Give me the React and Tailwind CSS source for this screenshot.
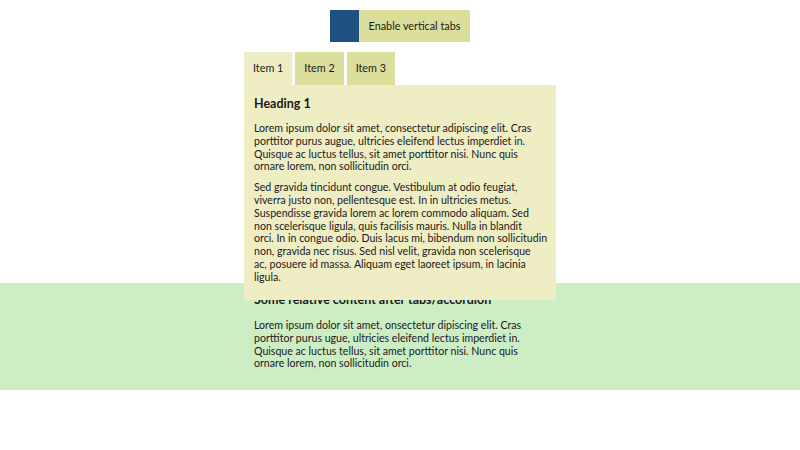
import { useState } from "react";

// panel copy kept as lines so the wrap matches the design
const TABS = [
  {
    label: "Item 1",
    heading: "Heading 1",
    body: [
      [
        "Lorem ipsum dolor sit amet, consectetur adipiscing elit. Cras",
        "porttitor purus augue, ultricies eleifend lectus imperdiet in.",
        "Quisque ac luctus tellus, sit amet porttitor nisi. Nunc quis",
        "ornare lorem, non sollicitudin orci.",
      ],
      [
        "Sed gravida tincidunt congue. Vestibulum at odio feugiat,",
        "viverra justo non, pellentesque est. In in ultricies metus.",
        "Suspendisse gravida lorem ac lorem commodo aliquam. Sed",
        "non scelerisque ligula, quis facilisis mauris. Nulla in blandit",
        "orci. In in congue odio. Duis lacus mi, bibendum non sollicitudin",
        "non, gravida nec risus. Sed nisl velit, gravida non scelerisque",
        "ac, posuere id massa. Aliquam eget laoreet ipsum, in lacinia",
        "ligula.",
      ],
    ],
  },
  { label: "Item 2", heading: "Heading 2", body: [["Tab two content."]] },
  { label: "Item 3", heading: "Heading 3", body: [["Tab three content."]] },
];

export default function App() {
  const [active, setActive] = useState(0);
  const [vertical, setVertical] = useState(false);
  const tab = TABS[active];

  return (
    <div className="min-h-[450px] bg-white text-[#1a1a1a] font-['Lato','Noto_Sans',sans-serif]">
      <div className="flex justify-center pt-[10px]">
        <button
          onClick={() => setVertical((v) => !v)}
          className="flex h-[32px] items-stretch bg-[#dcdf9c] text-[10.8px]"
        >
          <span className="w-[29px] bg-[#1f5180]" />
          <span className="flex items-center px-[10px]">Enable vertical tabs</span>
        </button>
      </div>

      <div className="mx-auto mt-[10px] h-[231px] w-[312px]">
        <div className="flex gap-[3px]">
          {TABS.map((t, i) => (
            <button
              key={t.label}
              onClick={() => setActive(i)}
              className={
                "h-[33px] px-[9px] text-[10.8px] " +
                (i === active ? "bg-[#eeedc4]" : "bg-[#dcdf9c]")
              }
            >
              {t.label}
            </button>
          ))}
        </div>
        <div className="relative z-10 bg-[#eeedc4] px-[10px] pt-[10px] pb-[16px]">
          <h3 className="mb-[10px] text-[12.5px] font-bold leading-[17px]">{tab.heading}</h3>
          <div className="flex flex-col gap-[8px]">
            {tab.body.map((lines, i) => (
              <p key={i} className="text-[10.6px] leading-[12.8px]">
                {lines.map((line) => (
                  <span key={line} className="block whitespace-nowrap">
                    {line}
                  </span>
                ))}
              </p>
            ))}
          </div>
        </div>
      </div>

      <section className="bg-[#cdedc4]">
        <div className="mx-auto w-[312px] px-[10px] pt-[8px] pb-[20px]">
          <h3 className="text-[12.5px] font-bold leading-[17px]">
            Some relative content after tabs/accordion
          </h3>
          <p className="mt-[11px] text-[10.6px] leading-[12.8px]">
            Lorem ipsum dolor sit amet, onsectetur dipiscing elit. Cras porttitor purus ugue, ultricies eleifend lectus imperdiet in. Quisque ac luctus tellus, sit amet porttitor nisi. Nunc quis ornare lorem, non sollicitudin orci.
          </p>
        </div>
      </section>
    </div>
  );
}
